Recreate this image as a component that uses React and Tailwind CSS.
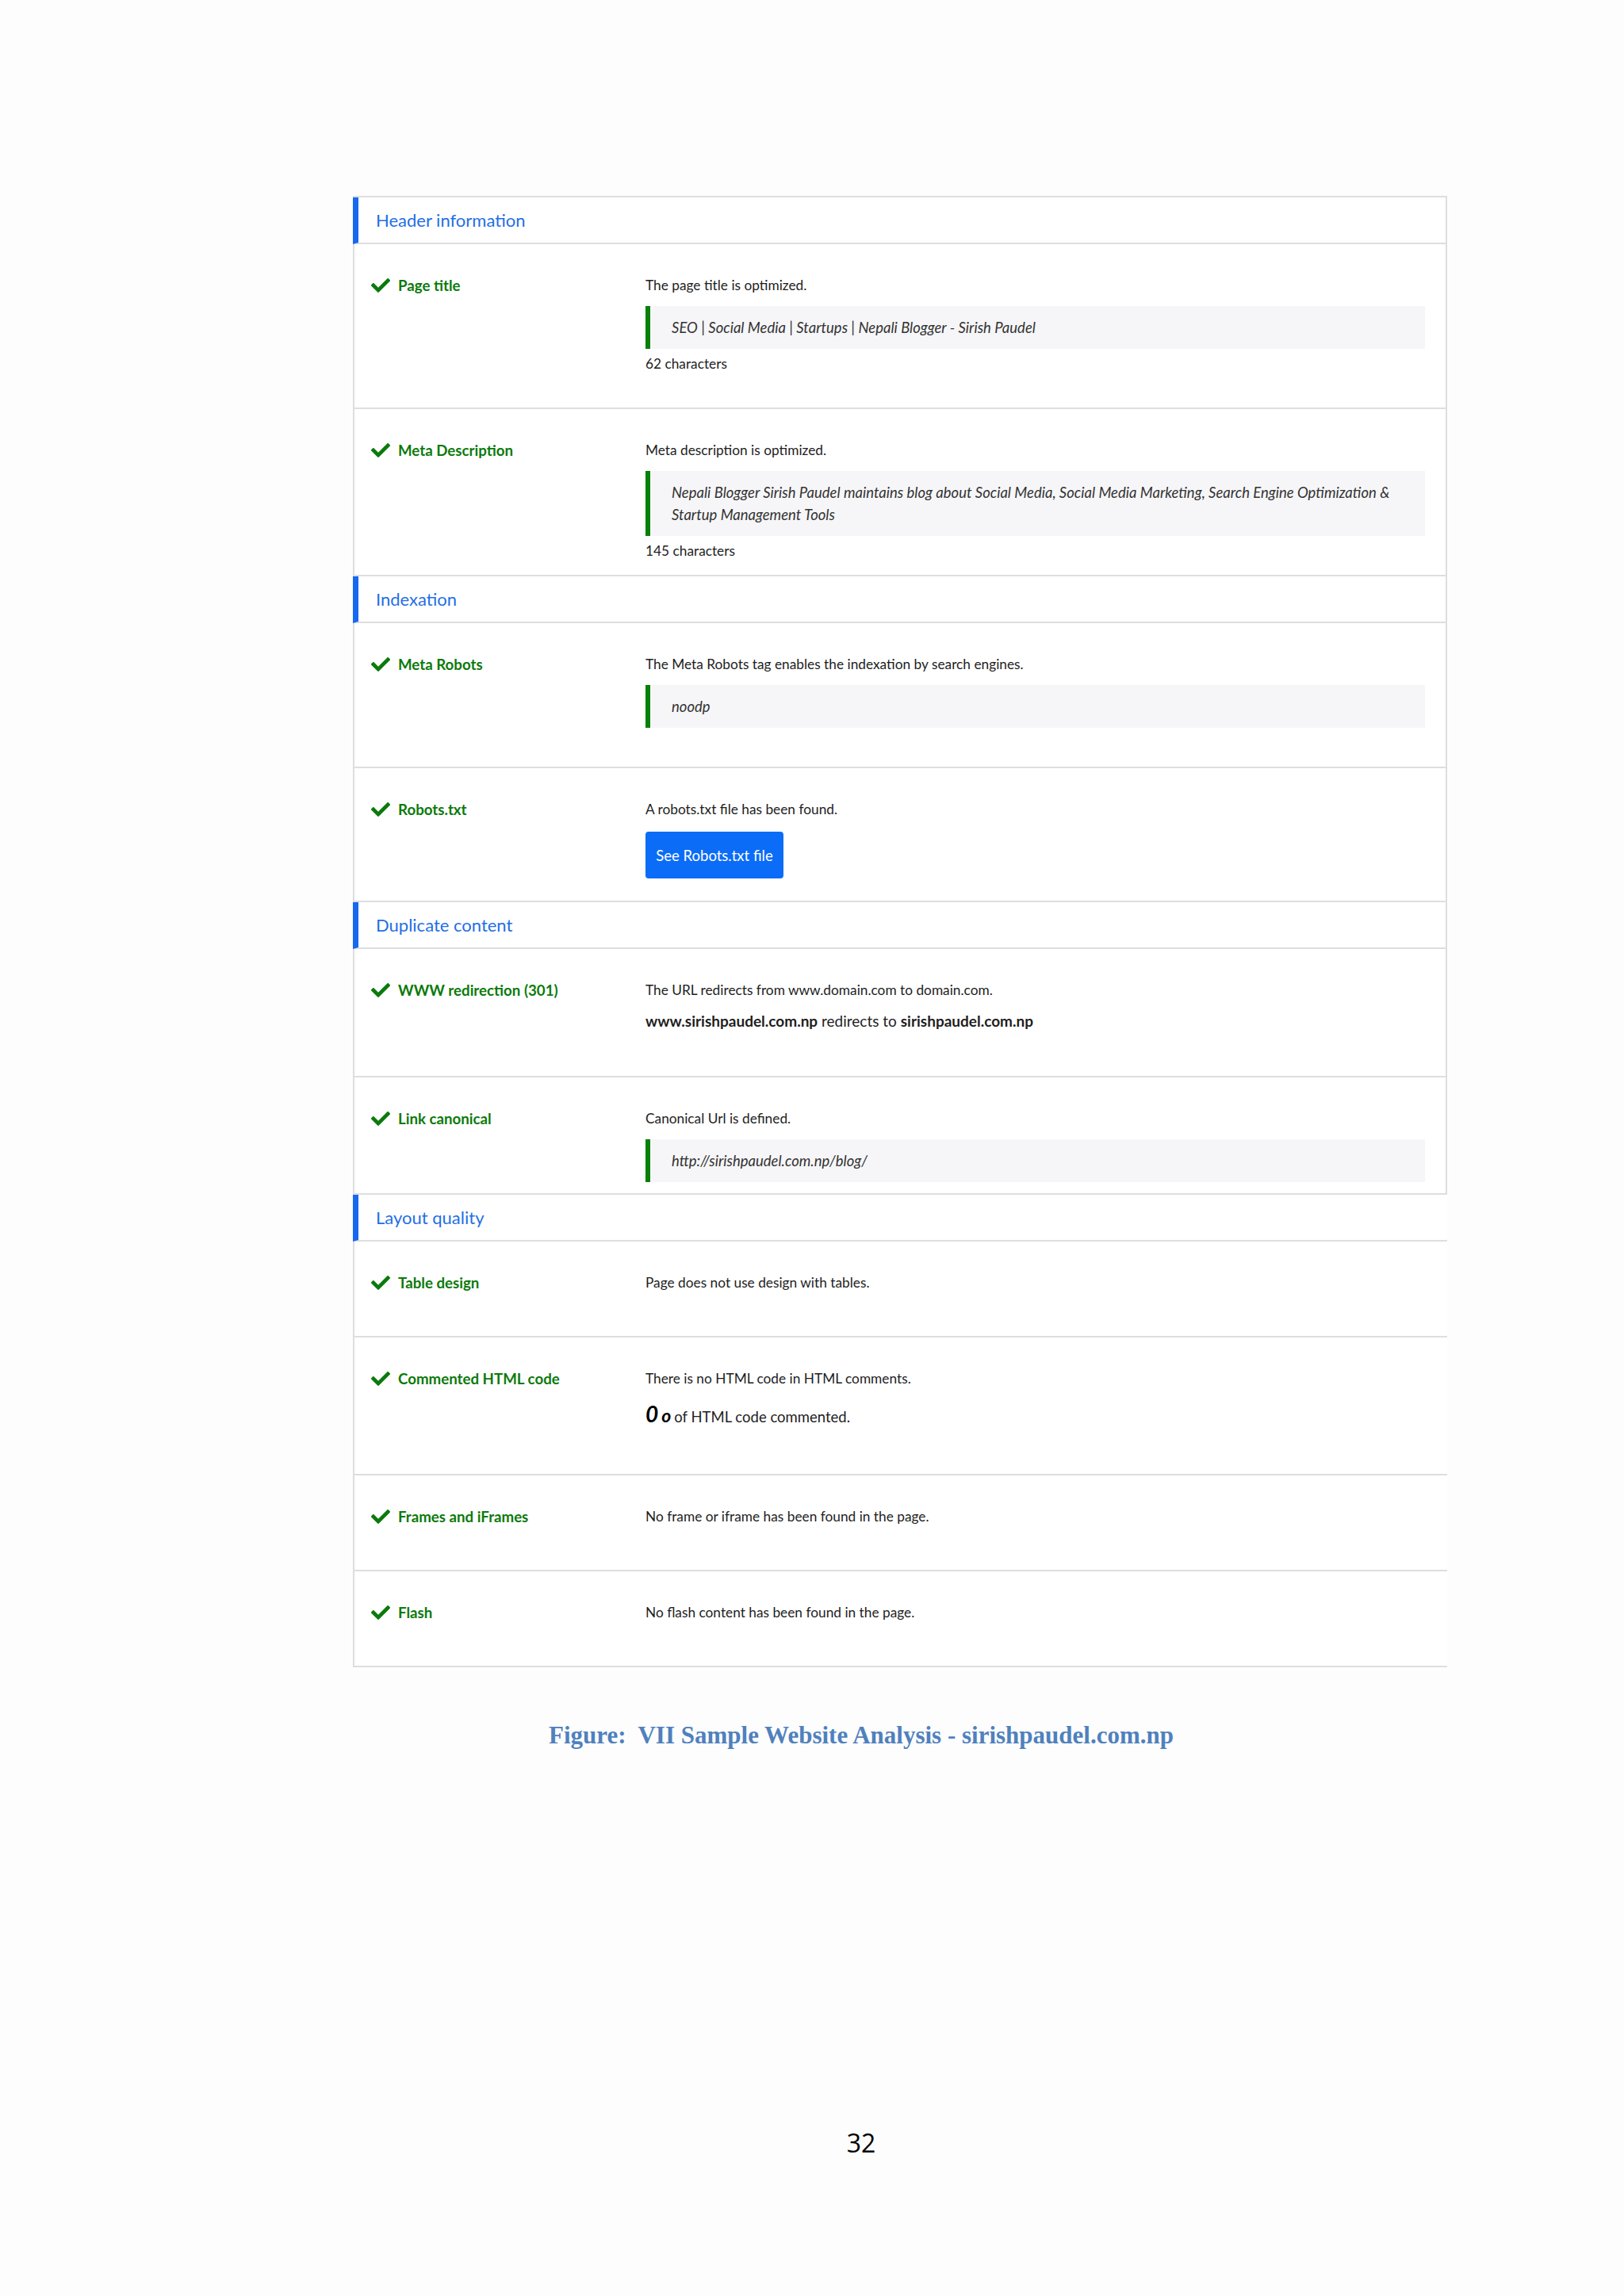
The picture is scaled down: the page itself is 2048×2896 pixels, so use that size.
import React from 'react';
import { FaCheck } from 'react-icons/fa';

const SectionHeader = ({ title, noRight }) => (
  <div
    className={`flex h-[59px] items-center border-b-2 border-l-[7px] border-b-[#dedede] border-l-[#1769f0] border-r-[#dedede] pl-[22px] ${noRight ? 'border-r-0' : 'border-r-2'}`}
  >
    <span className="text-[22px] text-[#1f6fe5]">{title}</span>
  </div>
);

const Quote = ({ children }) => (
  <div className="mt-[12px] border-l-[6px] border-[#068006] bg-[#f6f6f8] py-[13px] pl-[27px] pr-[20px] text-[18.5px] italic leading-[28px] text-[#333]">
    {children}
  </div>
);

const Row = ({ label, height, noRight, children }) => (
  <div
    className={`flex border-b-2 border-l-2 border-[#dedede] pl-[21px] pr-[26px] pt-[38px] ${noRight ? 'border-r-0' : 'border-r-2'}`}
    style={{ height }}
  >
    <div className="flex h-[28px] w-[346px] shrink-0 items-center gap-[10px]">
      <FaCheck className="text-[#0b7a0b]" size={24} />
      <span className="text-[18.7px] font-bold text-[#0b7a0b]">{label}</span>
    </div>
    <div className="flex-1 text-[17.3px] leading-[28px] text-[#1e1e1e]">{children}</div>
  </div>
);

export default function App() {
  return (
    <div className="min-h-[2896px] w-full bg-[#fdfdfd] pt-[247px]" style={{ fontFamily: 'Lato, "Noto Sans", sans-serif' }}>
      <div className="ml-[445px] w-[1380px] border-t-2 border-[#dedede] bg-white">
        <SectionHeader title="Header information" />
        <Row label="Page title" height={208}>
          <p>The page title is optimized.</p>
          <Quote>SEO | Social Media | Startups | Nepali Blogger - Sirish Paudel</Quote>
          <p className="mt-[5px]">62 characters</p>
        </Row>
        <Row label="Meta Description" height={211}>
          <p>Meta description is optimized.</p>
          <Quote>
            Nepali Blogger Sirish Paudel maintains blog about Social Media, Social Media Marketing, Search Engine Optimization &amp;
            <br />
            Startup Management Tools
          </Quote>
          <p className="mt-[5px]">145 characters</p>
        </Row>

        <SectionHeader title="Indexation" />
        <Row label="Meta Robots" height={183}>
          <p>The Meta Robots tag enables the indexation by search engines.</p>
          <Quote>noodp</Quote>
        </Row>
        <Row label="Robots.txt" height={169}>
          <p>A robots.txt file has been found.</p>
          <button className="mt-[14px] h-[59px] w-[174px] rounded-[4px] bg-[#0b6cf7] text-[18.5px] text-white">
            See Robots.txt file
          </button>
        </Row>

        <SectionHeader title="Duplicate content" />
        <Row label="WWW redirection (301)" height={162}>
          <p>The URL redirects from www.domain.com to domain.com.</p>
          <p className="mt-[11px] text-[19px]">
            <span className="font-bold">www.sirishpaudel.com.np</span> redirects to{' '}
            <span className="font-bold">sirishpaudel.com.np</span>
          </p>
        </Row>
        <Row label="Link canonical" height={148}>
          <p>Canonical Url is defined.</p>
          <Quote>http://sirishpaudel.com.np/blog/</Quote>
        </Row>

        <SectionHeader title="Layout quality" noRight />
        <Row label="Table design" height={121} noRight>
          <p>Page does not use design with tables.</p>
        </Row>
        <Row label="Commented HTML code" height={174} noRight>
          <p>There is no HTML code in HTML comments.</p>
          <p className="mt-[16px] flex items-baseline gap-[4px] text-[18.5px]">
            <span className="text-[28px] font-bold italic leading-[28px] text-black">0</span>
            <span className="text-[23px] font-bold italic leading-[28px] text-black">o</span>
            <span>of HTML code commented.</span>
          </p>
        </Row>
        <Row label="Frames and iFrames" height={121} noRight>
          <p>No frame or iframe has been found in the page.</p>
        </Row>
        <Row label="Flash" height={121} noRight>
          <p>No flash content has been found in the page.</p>
        </Row>
      </div>

      <div className="mt-[68px] pl-[124px] text-center">
        <p
          className="text-[31px] font-bold leading-[36px] text-[#4f81bd]"
          style={{ fontFamily: '"Liberation Serif", serif' }}
        >
          Figure:&nbsp; VII Sample Website Analysis - sirishpaudel.com.np
        </p>
      </div>

      <div className="mt-[476px] pl-[124px] text-center">
        <p className="text-[32px] leading-[40px] text-black" style={{ fontFamily: '"Open Sans", sans-serif' }}>
          32
        </p>
      </div>
    </div>
  );
}
